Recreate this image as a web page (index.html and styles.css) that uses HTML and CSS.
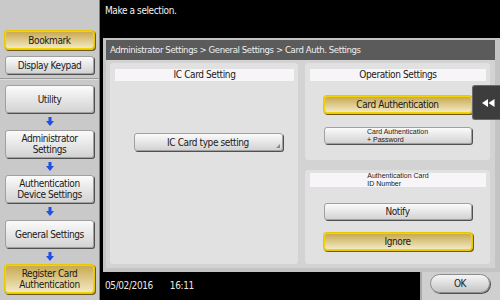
FILE: index.html
```html
<!DOCTYPE html>
<html lang="en">
<head>
  <meta charset="UTF-8" />
  <title>Card Auth. Settings</title>
  <link rel="stylesheet" href="styles.css">
</head>
<body>
  <div class="sidebar">
    <div class="side-top">
      <div class="btn gold side-btn">Bookmark</div>
      <div class="btn side-btn">Display Keypad</div>
    </div>
    <div class="side-flow">
      <div class="btn side-btn tall">Utility</div>
      <div class="arrow"><svg width="8" height="9" viewBox="0 0 8 9"><path d="M2.5 0h3v4H8L4 9 0 4h2.5z" fill="#1f4fe4"/></svg></div>
      <div class="btn side-btn tall">Administrator<br>Settings</div>
      <div class="arrow"><svg width="8" height="9" viewBox="0 0 8 9"><path d="M2.5 0h3v4H8L4 9 0 4h2.5z" fill="#1f4fe4"/></svg></div>
      <div class="btn side-btn tall">Authentication<br>Device Settings</div>
      <div class="arrow"><svg width="8" height="9" viewBox="0 0 8 9"><path d="M2.5 0h3v4H8L4 9 0 4h2.5z" fill="#1f4fe4"/></svg></div>
      <div class="btn side-btn tall">General Settings</div>
      <div class="arrow"><svg width="8" height="9" viewBox="0 0 8 9"><path d="M2.5 0h3v4H8L4 9 0 4h2.5z" fill="#1f4fe4"/></svg></div>
      <div class="btn gold side-btn tall">Register Card<br>Authentication</div>
    </div>
  </div>

  <div class="main">
    <div class="message">Make a selection.</div>

    <div class="window">
      <div class="title-bar">Administrator Settings &gt; General Settings &gt; Card Auth. Settings</div>
      <div class="window-body">
        <div class="panel panel-left">
          <div class="panel-head">IC Card Setting</div>
          <div class="btn panel-btn type-btn">IC Card type setting<span class="corner"></span></div>
        </div>
        <div class="right-col">
          <div class="panel panel-op">
            <div class="panel-head">Operation Settings</div>
            <div class="btn gold panel-btn first">Card Authentication</div>
            <div class="btn panel-btn small"><span class="lines">Card Authentication<br>+ Password</span></div>
          </div>
          <div class="panel panel-id">
            <div class="panel-head small"><span class="lines">Authentication Card<br>ID Number</span></div>
            <div class="btn panel-btn first">Notify</div>
            <div class="btn gold panel-btn">Ignore</div>
          </div>
        </div>
      </div>
    </div>

    <div class="bottom">
      <div class="status">
        <span>05/02/2016</span>
        <span>16:11</span>
      </div>
      <div class="ok-area">
        <div class="btn ok-btn">OK</div>
      </div>
    </div>
  </div>

  <div class="side-tab">
    <svg width="13" height="8" viewBox="0 0 13 8"><path d="M0 4L6 0v8zM6.5 4l6-4v8z" fill="#fff"/></svg>
  </div>
</body>
</html>
```

FILE: styles.css
```css
body {
  margin: 0;
  width: 500px;
  height: 300px;
  overflow: hidden;
  background: #000;
  display: flex;
  position: relative;
  font-family: "DejaVu Sans Condensed", "Liberation Sans", sans-serif;
  font-size: 10px;
  letter-spacing: -0.4px;
  color: #1a1a1a;
}

.btn {
  display: flex;
  align-items: center;
  justify-content: center;
  text-align: center;
  line-height: 11px;
  box-sizing: border-box;
  background: linear-gradient(#fbfbfb, #d3d3d3);
  border: 1px solid #a0a0a0;
  border-radius: 3px;
  box-shadow: 1px 1px 0 #505050;
}

.btn.gold {
  background: linear-gradient(#c9aa52, #f2e8c2);
  border: 1px solid #f3d400;
  box-shadow: 0 0 0 1px #e8c800, 1px 1px 0 1px #6a5a20;
}

/* sidebar */
.sidebar {
  width: 99px;
  flex-shrink: 0;
  background: #c9c9c9;
  border-right: 1px solid #7c7c7c;
}

.side-top {
  height: 79px;
  box-sizing: border-box;
  padding: 31px 0 0 5px;
  display: flex;
  flex-direction: column;
  gap: 7px;
  border-bottom: 1px solid #9a9a9a;
}

.side-flow {
  padding: 5px 0 0 5px;
  display: flex;
  flex-direction: column;
  border-top: 1px solid #dedede;
}

.side-btn {
  width: 89px;
  height: 18px;
}

.side-btn.tall {
  height: 28px;
}

.arrow {
  height: 17px;
  width: 89px;
  display: flex;
  align-items: center;
  justify-content: center;
}

.arrow svg {
  display: block;
}

/* main area */
.main {
  width: 400px;
  display: flex;
  flex-direction: column;
}

.message {
  height: 38px;
  box-sizing: border-box;
  padding: 5px 0 0 5px;
  color: #f2f2f2;
}

.window {
  height: 234px;
  margin-left: 3px;
  box-sizing: border-box;
  padding: 2px 5px 4px 3px;
  background: #c4c4c4;
  display: flex;
  flex-direction: column;
}

.title-bar {
  height: 20px;
  box-sizing: border-box;
  padding: 4px 0 0 4px;
  background: #5b5b5b;
  color: #f0f0f0;
  font-size: 9.5px;
}

.window-body {
  flex: 1;
  display: flex;
  gap: 7px;
  padding: 3px 5px 4px 4px;
  background: #d3d3d3;
}

.panel {
  background: #e1e1e1;
  border-radius: 3px;
  display: flex;
  flex-direction: column;
  align-items: center;
}

.panel-head {
  align-self: stretch;
  height: 12px;
  margin: 0 4px 0 5px;
  background: #f7f5f7;
  text-align: center;
  line-height: 12px;
}

.panel-head.small,
.btn.small {
  font-family: "Liberation Sans", sans-serif;
  font-size: 7px;
  line-height: 8px;
  letter-spacing: 0;
}

.panel-head.small {
  height: 14px;
  margin-top: 0;
  display: flex;
  justify-content: center;
  align-items: center;
}

.lines {
  display: block;
  text-align: left;
}

.panel-left {
  width: 188px;
  padding-top: 6px;
}

.right-col {
  width: 185px;
  display: flex;
  flex-direction: column;
  gap: 10px;
}

.panel-op {
  height: 97px;
  box-sizing: border-box;
  padding-top: 6px;
}

.panel-id {
  flex: 1;
  padding-top: 3px;
}

.panel-btn {
  width: 148px;
  height: 17px;
  margin-top: 14px;
}

.panel-btn.first {
  margin-top: 15px;
}

.panel-id .panel-btn {
  margin-top: 13px;
}

.panel-id .panel-btn.first {
  margin-top: 16px;
}

.type-btn {
  position: relative;
  width: 149px;
  height: 18px;
  margin: 52px 0 0 8px;
}

.corner {
  position: absolute;
  right: 2px;
  bottom: 2px;
  width: 0;
  height: 0;
  border-left: 4px solid transparent;
  border-bottom: 4px solid #8a8a8a;
}

/* bottom row */
.bottom {
  flex: 1;
  display: flex;
}

.status {
  width: 320px;
  padding: 8px 0 0 5px;
  box-sizing: border-box;
  display: flex;
  gap: 17px;
  color: #e8e8e8;
}

.ok-area {
  flex: 1;
  background: #cfcfcf;
  border-left: 2px solid #a8a8a8;
  padding: 2px 0 0 8px;
}

.ok-btn {
  width: 60px;
  height: 19px;
  border-radius: 10px;
  background: linear-gradient(#f6f6f6, #c4c4c4);
  border-color: #8c8c8c;
}

.side-tab {
  position: absolute;
  left: 472px;
  top: 85px;
  width: 28px;
  height: 35px;
  box-sizing: border-box;
  background: #3d3d3d;
  border-radius: 3px 0 0 3px;
  border: 1px solid #6a6a6a;
  border-right: none;
  display: flex;
  align-items: center;
  justify-content: center;
  padding-left: 4px;
}

.side-tab svg {
  display: block;
}
```
